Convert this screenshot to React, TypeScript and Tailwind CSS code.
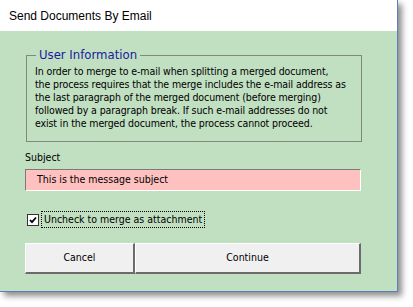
export default function App() {
  const ui = { fontFamily: '"DejaVu Sans Condensed", "Liberation Sans", Arial, sans-serif' };
  const title = { fontFamily: '"Liberation Sans", Arial, sans-serif' };

  return (
    <div className="w-[413px] h-[307px] bg-white overflow-hidden" style={ui}>
      <div className="w-[398px] h-[292px] flex flex-col border-r border-b border-[#5a7fb8] shadow-[4px_4px_6px_rgba(0,0,0,0.45)]">
        {/* title bar */}
        <div className="h-[31px] bg-white flex items-center pl-[9px] text-[12px] text-black" style={title}>
          Send Documents By Email
        </div>

        {/* dialog body */}
        <div className="flex-1 bg-[#c1dfc1] pl-[25px] pt-[16px] flex flex-col">
          <fieldset className="ml-[1px] w-[336px] border border-[#7f8a7f] pl-[8px] pb-[11px]">
            <legend className="ml-[1px] px-[3px] text-[13px] leading-[16px] text-[#1a1aa0]">
              User Information
            </legend>
            <p className="pt-[2px] text-[10.5px] leading-[13px] tracking-[-0.1px] whitespace-nowrap text-black">
              In order to merge to e-mail when splitting a merged document,
              <br />
              the process requires that the merge includes the e-mail address as
              <br />
              the last paragraph of the merged document (before merging)
              <br />
              followed by a paragraph break. If such e-mail addresses do not
              <br />
              exist in the merged document, the process cannot proceed.
            </p>
          </fieldset>

          <label className="mt-[9px] text-[10.5px] leading-[13px] text-black">Subject</label>
          <div className="mt-[5px] w-[336px] h-[22px] bg-[#ffc0c0] border-t border-l border-t-[#7a7a7a] border-l-[#7a7a7a] border-b border-r border-b-white border-r-white flex items-center pl-[11px] text-[10.5px] text-black">
            This is the message subject
          </div>

          <div className="mt-[20px] flex items-center h-[17px]">
            <div className="ml-[2px] w-[12px] h-[12px] bg-white border border-[#333] flex items-center justify-center">
              <svg width="8" height="8" viewBox="0 0 8 8">
                <path d="M1 4 L3 6.2 L7 1.5" fill="none" stroke="#000" strokeWidth="1.8" />
              </svg>
            </div>
            <span className="ml-[2px] h-[17px] px-[2px] flex items-center border border-dotted border-black text-[10.5px] text-black">
              Uncheck to merge as attachment
            </span>
          </div>

          <div className="mt-[15px] flex w-[336px] h-[31px]">
            <button className="w-[110px] h-full bg-[#f0f0f0] border-t border-l border-t-white border-l-white border-b-2 border-r-2 border-b-[#6b6b6b] border-r-[#6b6b6b] text-[10.5px] text-black">
              Cancel
            </button>
            <button className="flex-1 h-full bg-[#f0f0f0] border-t border-l border-t-white border-l-white border-b-2 border-r-2 border-b-[#6b6b6b] border-r-[#6b6b6b] text-[10.5px] text-black">
              Continue
            </button>
          </div>
        </div>
      </div>
    </div>
  );
}
